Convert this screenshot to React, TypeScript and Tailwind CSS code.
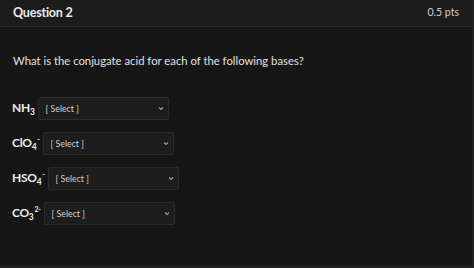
export default function App() {
  const rows = [
    { base: "NH", sub: "3", sup: "" },
    { base: "ClO", sub: "4", sup: "-" },
    { base: "HSO", sub: "4", sup: "-" },
    { base: "CO", sub: "3", sup: "2-" },
  ];

  return (
    <div
      className="w-[474px] h-[268px] bg-[#161616] border-r-2 border-b-[3px] border-[#222] flex flex-col text-[#e6e6e6]"
      style={{ fontFamily: "Lato, 'Open Sans', sans-serif" }}
    >
      <div className="h-[27px] shrink-0 bg-[#1c1c1c] border-b border-[#2b2b2b] flex items-center justify-between pl-[13px] pr-[13px]">
        <span className="text-[12.5px] font-bold text-[#ececec] tracking-[-0.2px]">Question 2</span>
        <span className="text-[10.5px] text-[#d0d0d0]">0.5 pts</span>
      </div>

      <div className="px-[12px]">
        <p className="mt-[26px] ml-[1px] text-[11.3px] text-[#e2e2e2]">
          What is the conjugate acid for each of the following bases?
        </p>

        <div className="mt-[27px] flex flex-col gap-[12px]">
          {rows.map((r) => (
            <div key={r.base + r.sup} className="flex items-center gap-[3px]">
              <span className="text-[12px] font-bold text-[#ededed] leading-none tracking-[-0.3px] flex items-baseline">
                <span>{r.base}</span>
                <span className="text-[8.5px] relative top-[3px]">{r.sub}</span>
                {r.sup && (
                  <span className="text-[7px] relative -top-[5px] ml-[1px]">{r.sup}</span>
                )}
              </span>
              <div className="w-[131px] h-[23px] rounded-[2px] bg-[#1d1d1d] border border-[#2c2c2c] flex items-center justify-between pl-[7px] pr-[4px]">
                <span className="text-[8.8px] text-[#d2d2d2]">[ Select ]</span>
                <svg width="6" height="5" viewBox="0 0 6 5" fill="none">
                  <path d="M1 1.5l2 2 2-2" stroke="#9a9a9a" strokeWidth="1.2" />
                </svg>
              </div>
            </div>
          ))}
        </div>
      </div>
    </div>
  );
}
